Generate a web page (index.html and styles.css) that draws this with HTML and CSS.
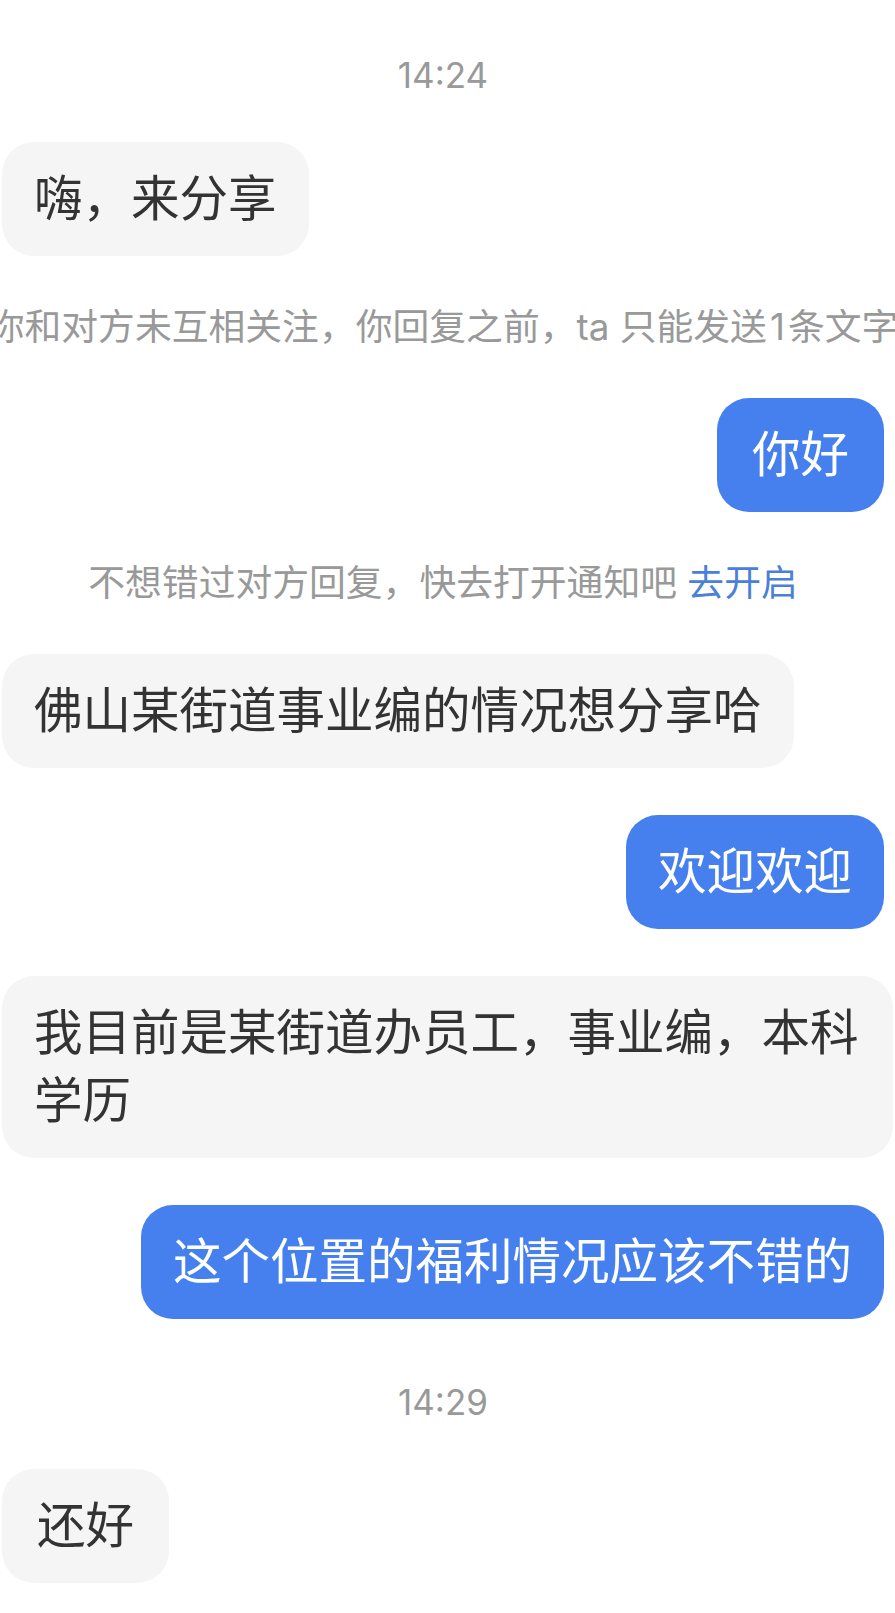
FILE: index.html
```html
<!DOCTYPE html>
<html lang="zh-CN">
<head>
<meta charset="utf-8">
<title>聊天</title>
<link rel="stylesheet" href="styles.css">
</head>
<body>
<main class="chat">
  <div class="time">14:24</div>
  <div class="msg left">嗨，来分享</div>
  <div class="notice nowrap">你和对方未互相关注，你回复之前，ta 只能发送<span class="num">1</span>条文字</div>
  <div class="msg right short">你好</div>
  <div class="notice">不想错过对方回复，快去打开通知吧 <span class="link">去开启</span></div>
  <div class="msg left">佛山某街道事业编的情况想分享哈</div>
  <div class="msg right">欢迎欢迎</div>
  <div class="msg left">我目前是某街道办员工，事业编，本科学历</div>
  <div class="msg right">这个位置的福利情况应该不错的</div>
  <div class="time time-gap">14:29</div>
  <div class="msg left short">还好</div>
</main>
</body>
</html>
```

FILE: styles.css
```css
html, body {
  margin: 0;
  padding: 0;
  background: #ffffff;
  overflow: hidden;
}

body {
  font-family: "Inter", "Noto Sans CJK SC", sans-serif;
  width: 895px;
  height: 1613px;
}

.chat {
  display: flex;
  flex-direction: column;
  gap: 47px;
  padding: 55px 2px 0 2px;
}

.time {
  align-self: center;
  margin-right: 9px;
  height: 40px;
  line-height: 40px;
  font-size: 35px;
  color: #999999;
  white-space: nowrap;
}

.time-gap {
  margin-top: 16px;
}

.notice {
  align-self: center;
  margin-right: 9px;
  height: 48px;
  line-height: 48px;
  font-size: 36.8px;
  color: #999999;
  white-space: nowrap;
}

.num {
  padding: 0 3px;
}

.link {
  color: #4b7fd9;
}

.msg {
  font-size: 48.5px;
  line-height: 68px;
  padding: 23px 32px;
  border-radius: 32px;
  max-width: 100%;
  box-sizing: border-box;
  color: #333333;
}

.short {
  padding-left: 35px;
  padding-right: 35px;
}

.left {
  align-self: flex-start;
  background: #f5f5f5;
}

.right {
  align-self: flex-end;
  margin-right: 9px;
  background: #4680ef;
  color: #ffffff;
}
```
